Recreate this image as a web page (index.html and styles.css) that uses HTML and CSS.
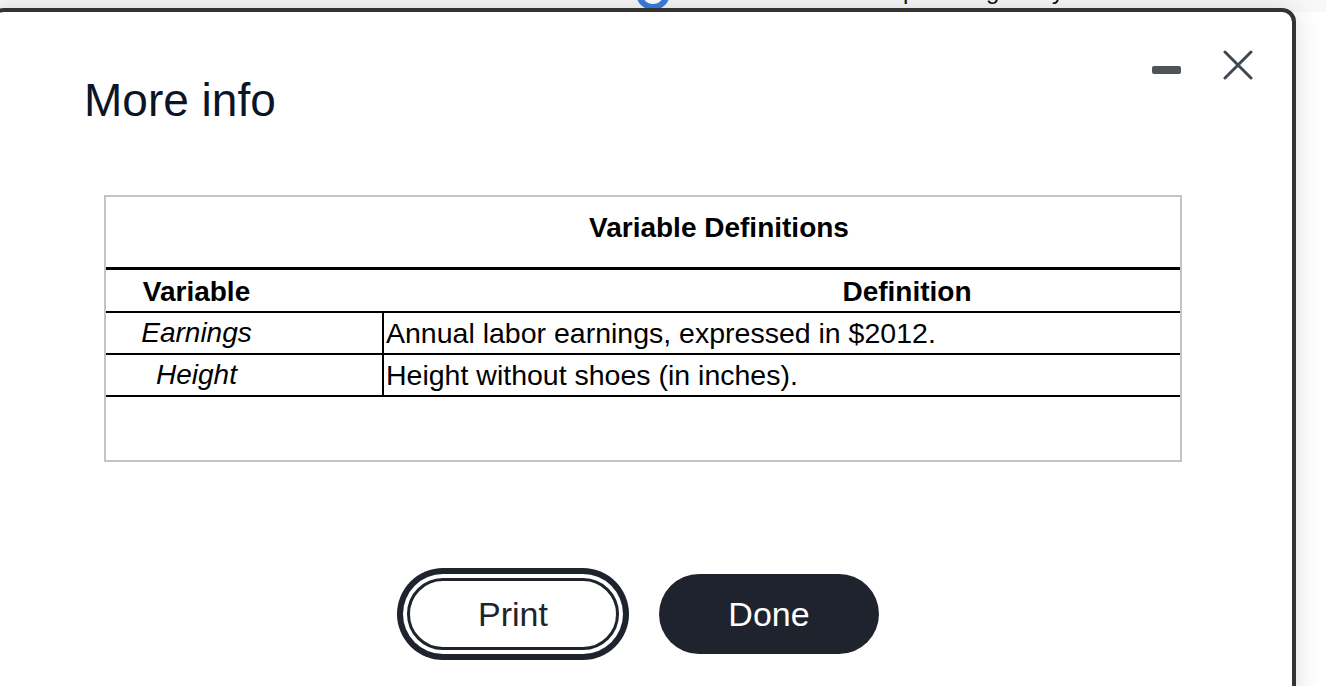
FILE: index.html
```html
<!DOCTYPE html>
<html lang="en">
<head>
<meta charset="utf-8">
<title>More info</title>
<link rel="stylesheet" href="styles.css">
</head>
<body>
<div class="page">
  <span class="bg-ring"></span>
  <span class="bg-glyph g1">p</span>
  <span class="bg-glyph g2">g</span>
  <span class="bg-glyph g3">y</span>
</div>

<div class="dialog" role="dialog" aria-label="More info">
  <div class="dialog-header">
    <h1 class="dialog-title">More info</h1>
    <div class="window-controls">
      <span class="ctl-min" aria-label="Minimize"></span>
      <svg class="ctl-close" width="32" height="30" viewBox="0 0 32 30" aria-label="Close">
        <path d="M3 2 L29 28 M29 2 L3 28" stroke="#3f4753" stroke-width="3" stroke-linecap="round" fill="none"/>
      </svg>
    </div>
  </div>

  <div class="dialog-body">
    <div class="var-box">
      <div class="var-title">Variable Definitions</div>
      <div class="var-row var-head">
        <div class="cell-var">Variable</div>
        <div class="cell-def head-def">Definition</div>
      </div>
      <div class="var-row">
        <div class="cell-var"><i>Earnings</i></div>
        <div class="cell-def split">Annual labor earnings, expressed in $2012.</div>
      </div>
      <div class="var-row">
        <div class="cell-var"><i>Height</i></div>
        <div class="cell-def split">Height without shoes (in inches).</div>
      </div>
      <div class="var-empty"></div>
    </div>

    <div class="actions">
      <button class="btn btn-print">Print</button>
      <button class="btn btn-done">Done</button>
    </div>
  </div>
</div>
</body>
</html>
```

FILE: styles.css
```css
html, body {
  margin: 0;
  padding: 0;
  width: 1326px;
  height: 686px;
  overflow: hidden;
  background: #ffffff;
  font-family: "Liberation Sans", Arial, sans-serif;
}

.page {
  height: 12px;
  background: #f8f8f8;
  position: relative;
}

.bg-ring {
  position: absolute;
  left: 636px;
  top: -24px;
  width: 22px;
  height: 22px;
  border: 6px solid #3a7ce0;
  border-radius: 50%;
  background: #fff;
}

.bg-glyph {
  position: absolute;
  top: -21px;
  font-size: 24px;
  line-height: 24px;
  color: #111;
}
.g1 { left: 903px; }
.g2 { left: 986px; }
.g3 { left: 1052px; }

.dialog {
  position: absolute;
  left: -10px;
  top: 8px;
  width: 1306px;
  height: 720px;
  box-sizing: border-box;
  border: 4px solid #333333;
  border-radius: 14px;
  background: #ffffff;
  box-shadow: 0 0 28px rgba(0, 0, 0, 0.13);
}

.dialog-header {
  display: flex;
  justify-content: space-between;
  align-items: flex-start;
  padding: 38px 38px 0 90px;
}

.dialog-title {
  margin: 27px 0 0 0;
  font-size: 46px;
  line-height: 46px;
  font-weight: 400;
  color: #0b1528;
}

.window-controls {
  display: flex;
  align-items: flex-start;
  gap: 41px;
}

.ctl-min {
  display: block;
  width: 29px;
  height: 8px;
  margin-top: 16px;
  background: #505459;
  border-radius: 2px;
}

.ctl-close {
  display: block;
}

.dialog-body {
  padding: 72px 0 0 0;
}

.var-box {
  margin-left: 110px;
  width: 1078px;
  box-sizing: border-box;
  border: 2px solid #c4c4c4;
  color: #000;
  font-size: 28px;
}

.var-title {
  height: 73px;
  box-sizing: border-box;
  padding: 15px 0 0 152px;
  text-align: center;
  font-weight: 700;
  line-height: 32px;
  border-bottom: 3px solid #000;
}

.var-row {
  display: grid;
  grid-template-columns: 276px 1fr;
  height: 42px;
  box-sizing: border-box;
  border-bottom: 2px solid #000;
  line-height: 40px;
}

.var-head {
  height: 43px;
  line-height: 43px;
  font-weight: 700;
}

.cell-var {
  text-align: center;
  padding-right: 95px;
}

.cell-def {
  padding-left: 2px;
  white-space: nowrap;
}

.split {
  border-left: 2px solid #000;
  font-size: 28.5px;
}

.head-def {
  text-align: center;
  padding-left: 252px;
}

.var-empty {
  height: 63px;
}

.actions {
  display: flex;
  justify-content: center;
  align-items: center;
  gap: 40px;
  margin-top: 112px;
}

.btn {
  font-family: "Liberation Sans", Arial, sans-serif;
  font-size: 34px;
  cursor: pointer;
  box-sizing: border-box;
  padding: 0;
}

.btn-print {
  width: 212px;
  height: 72px;
  border: 3px solid #1f232d;
  border-radius: 36px;
  background: #ffffff;
  color: #1f232d;
  box-shadow: 0 0 0 4px #ffffff, 0 0 0 10px #1f232d;
}

.btn-done {
  width: 220px;
  height: 80px;
  border: none;
  border-radius: 40px;
  background: #1f232d;
  color: #ffffff;
}
```
